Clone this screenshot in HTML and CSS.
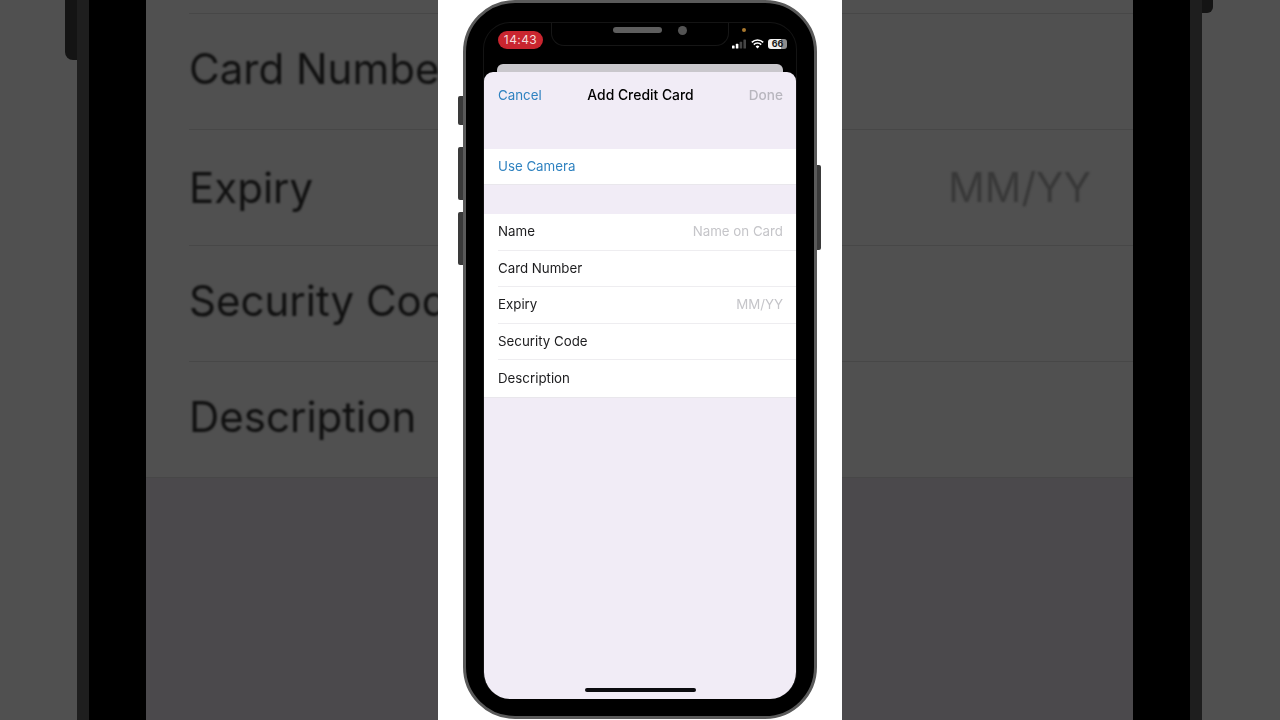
FILE: index.html
```html
<!DOCTYPE html>
<html lang="en">
<head>
<meta charset="utf-8">
<title>Add Credit Card</title>
<link rel="stylesheet" href="styles.css">
</head>
<body>
<div class="page">
  <aside class="side side-left">
    <div class="gutter gutter-left"></div>
    <div class="side-btn side-btn-left"></div>
    <div class="bezel"></div>
    <div class="band band-left"></div>
    <div class="zoom zoom-left">
      <div class="zoom-top zoom-inset"></div>
      <div class="zoom-row zoom-inset"><span class="zoom-label">Card Number</span></div>
      <div class="zoom-row zoom-inset zoom-row-low"><span class="zoom-label">Expiry</span></div>
      <div class="zoom-row zoom-inset"><span class="zoom-label">Security Code</span></div>
      <div class="zoom-row zoom-inset zoom-last"><span class="zoom-label">Description</span></div>
      <div class="zoom-rest"></div>
    </div>
  </aside>

  <main class="center">
    <div class="phone">
      <span class="hw hw-mute"></span>
      <span class="hw hw-up"></span>
      <span class="hw hw-down"></span>
      <span class="hw hw-power"></span>
      <div class="screen">
        <div class="notch">
          <span class="speaker"></span>
          <span class="camera"></span>
        </div>
        <div class="status">
          <span class="time">14:43</span>
          <div class="status-right">
            <span class="privacy-dot"></span>
            <div class="status-icons">
              <svg class="ic-signal" width="15" height="10" viewBox="0 0 15 10">
                <rect x="0" y="6.5" width="2.6" height="3" rx=".6" fill="#fff"/>
                <rect x="3.8" y="4.8" width="2.6" height="4.7" rx=".6" fill="#fff"/>
                <rect x="7.6" y="2.8" width="2.6" height="6.7" rx=".6" fill="#444"/>
                <rect x="11.4" y=".5" width="2.6" height="9" rx=".6" fill="#444"/>
              </svg>
              <svg class="ic-wifi" width="13" height="10" viewBox="0 0 13 10">
                <path d="M.8 3.4a8 8 0 0 1 11.4 0" fill="none" stroke="#fff" stroke-width="1.6"/>
                <path d="M2.8 5.6a5.2 5.2 0 0 1 7.4 0" fill="none" stroke="#fff" stroke-width="1.6"/>
                <path d="M4.6 7.4a2.6 2.6 0 0 1 3.8 0L6.5 9.6z" fill="#fff"/>
              </svg>
              <span class="battery"><span class="battery-level">66</span></span>
            </div>
          </div>
        </div>
        <div class="peek"></div>
        <section class="sheet">
          <header class="nav">
            <span class="link">Cancel</span>
            <span class="nav-title">Add Credit Card</span>
            <span class="nav-done">Done</span>
          </header>
          <div class="group group-camera">
            <div class="row"><span class="link">Use Camera</span></div>
          </div>
          <div class="group group-form">
            <div class="row row-line"><span>Name</span><span class="hint">Name on Card</span></div>
            <div class="row row-line"><span>Card Number</span></div>
            <div class="row row-line"><span>Expiry</span><span class="hint">MM/YY</span></div>
            <div class="row row-line"><span>Security Code</span></div>
            <div class="row"><span>Description</span></div>
          </div>
          <div class="home-bar"></div>
        </section>
      </div>
    </div>
  </main>

  <aside class="side side-right">
    <div class="zoom zoom-right">
      <div class="zoom-top"></div>
      <div class="zoom-row"></div>
      <div class="zoom-row zoom-row-end zoom-row-low"><span class="zoom-hint">MM/YY</span></div>
      <div class="zoom-row"></div>
      <div class="zoom-row zoom-last"></div>
      <div class="zoom-rest"></div>
    </div>
    <div class="band band-right"></div>
    <div class="bezel"></div>
    <div class="side-btn side-btn-right"></div>
    <div class="gutter gutter-right"></div>
  </aside>
</div>
</body>
</html>
```

FILE: styles.css
```css
* { box-sizing: border-box; }

html, body {
  margin: 0;
  height: 100%;
  background: #fff;
  overflow: hidden;
}

.page {
  display: flex;
  width: 1280px;
  height: 720px;
  font-family: Inter, "Liberation Sans", sans-serif;
}

/* blurred, enlarged copies at both sides */
.side {
  display: flex;
  width: 438px;
  height: 720px;
  flex: none;
  overflow: hidden;
  background: #505050;
}

.gutter { flex: none; background: #505050; }
.gutter-left { width: 65px; }
.gutter-right { width: 67px; }

.side-btn {
  flex: none;
  width: 12px;
  background: #141414;
}
.side-btn-left { height: 60px; border-bottom-left-radius: 8px; }
.side-btn-right { width: 11px; height: 13px; border-bottom-right-radius: 6px; }

.bezel {
  flex: none;
  width: 12px;
  background: #1e1e1e;
}

.band {
  flex: none;
  background: #000;
}
.band-left { width: 57px; }
.band-right { width: 57px; }

.zoom {
  display: flex;
  flex-direction: column;
  flex: 1;
  min-width: 0;
  height: 720px;
}

.zoom-top {
  flex: none;
  height: 14px;
  border-bottom: 1px solid #474747;
}

.zoom-row {
  display: flex;
  align-items: center;
  flex: none;
  height: 116px;
  padding-bottom: 6px;
  border-bottom: 1px solid #474747;
  overflow: hidden;
}

.zoom-row-low { padding-bottom: 0; }

.zoom-left .zoom-inset { margin-left: 43px; }

.zoom-row-end {
  justify-content: flex-end;
  padding-right: 42px;
}

.zoom-left .zoom-last {
  margin-left: 0;
  padding-left: 43px;
}

.zoom-label,
.zoom-hint {
  font-size: 42px;
  line-height: 56px;
  white-space: nowrap;
  filter: blur(1px);
}
.zoom-label { color: #101010; }
.zoom-hint { color: #383838; font-size: 40.5px; }

.zoom-rest {
  flex: 1;
  background: #4b494c;
}

/* centre column */
.center {
  flex: none;
  width: 404px;
  height: 720px;
  padding-left: 25px;
  background: #fff;
}

.phone {
  position: relative;
  width: 354px;
  height: 719px;
  padding: 19px 17px 17px;
  border: 3px solid #5a5a5a;
  border-radius: 52px;
  background: #000;
}

.hw {
  position: absolute;
  background: #3a3a3a;
}
.hw-mute { left: -8px; top: 93px; width: 5px; height: 29px; border-radius: 2px 0 0 2px; }
.hw-up { left: -8px; top: 144px; width: 5px; height: 53px; border-radius: 2px 0 0 2px; }
.hw-down { left: -8px; top: 209px; width: 5px; height: 53px; border-radius: 2px 0 0 2px; }
.hw-power { right: -7px; top: 162px; width: 4px; height: 85px; border-radius: 0 2px 2px 0; }

.screen {
  position: relative;
  display: flex;
  flex-direction: column;
  height: 100%;
  border: 1px solid #141414;
  border-bottom: 0;
  border-radius: 27px;
  overflow: hidden;
}

.notch {
  position: absolute;
  left: 67px;
  top: -1px;
  display: flex;
  align-items: center;
  width: 178px;
  height: 24px;
  padding: 0 0 7px 61px;
  border: 1px solid #161616;
  border-top: 0;
  border-radius: 0 0 13px 13px;
  background: #000;
}

.speaker {
  width: 49px;
  height: 6px;
  border-radius: 3px;
  background: #5e5e5e;
}

.camera {
  width: 9px;
  height: 9px;
  margin-left: 15.5px;
  border-radius: 50%;
  background: #545454;
}

.status {
  display: flex;
  justify-content: space-between;
  flex: none;
  height: 41px;
  padding: 9px 8px 0 14px;
}

.time {
  width: 45px;
  height: 18px;
  margin-top: -1px;
  border-radius: 9px;
  background: #c9252f;
  color: #f4dcdc;
  font-size: 12px;
  line-height: 18px;
  letter-spacing: .4px;
  text-align: center;
}

.status-right {
  display: flex;
  flex-direction: column;
  align-items: flex-start;
  width: 56px;
  margin-top: -4px;
}

.privacy-dot {
  width: 4px;
  height: 4px;
  margin: 0 0 7px 10px;
  border-radius: 50%;
  background: #a9782e;
}

.status-icons {
  display: flex;
  align-items: center;
  gap: 4px;
}

.battery {
  position: relative;
  display: block;
  width: 19px;
  height: 10px;
  border-radius: 3px;
  background: linear-gradient(90deg, #f2f2f2 0 66%, #8d8d8d 66%);
}

.battery-level {
  display: block;
  color: #1a1a1a;
  font-size: 9px;
  font-weight: 700;
  line-height: 10px;
  text-align: center;
}

.peek {
  flex: none;
  height: 8px;
  margin: 0 13px;
  border-radius: 6px 6px 0 0;
  background: #c9c7cc;
}

.sheet {
  position: relative;
  flex: 1;
  border-radius: 9px 9px 0 0;
  background: #f1ecf6;
  color: #1c1c1e;
  font-size: 13.3px;
  filter: blur(.25px);
}

.nav {
  display: grid;
  grid-template-columns: 1fr auto 1fr;
  align-items: center;
  height: 46px;
  padding: 0 13px 0 14px;
}

.link { color: #2f82c0; }

.nav-title {
  color: #000;
  font-size: 13.9px;
  font-weight: 500;
}

.nav-done {
  color: #b8b6be;
  font-size: 13.6px;
  font-weight: 500;
  text-align: right;
}

.group {
  background: #fff;
}
.group-camera { margin-top: 31px; border-bottom: 1px solid #e9e7ec; }
.group-form { margin-top: 29px; border-bottom: 1px solid #e9e7ec; }

.group-camera .row { height: 35px; }

.row {
  display: flex;
  justify-content: space-between;
  align-items: center;
  height: 36.6px;
  margin-left: 14px;
  padding-right: 13px;
  padding-bottom: 1px;
  white-space: nowrap;
}

.row-line { border-bottom: 1px solid #eeedf0; }

.hint { color: #c5c5c9; }

.home-bar {
  position: absolute;
  left: 101px;
  bottom: 7px;
  width: 111px;
  height: 4px;
  border-radius: 2px;
  background: #0b0b0f;
}
```
